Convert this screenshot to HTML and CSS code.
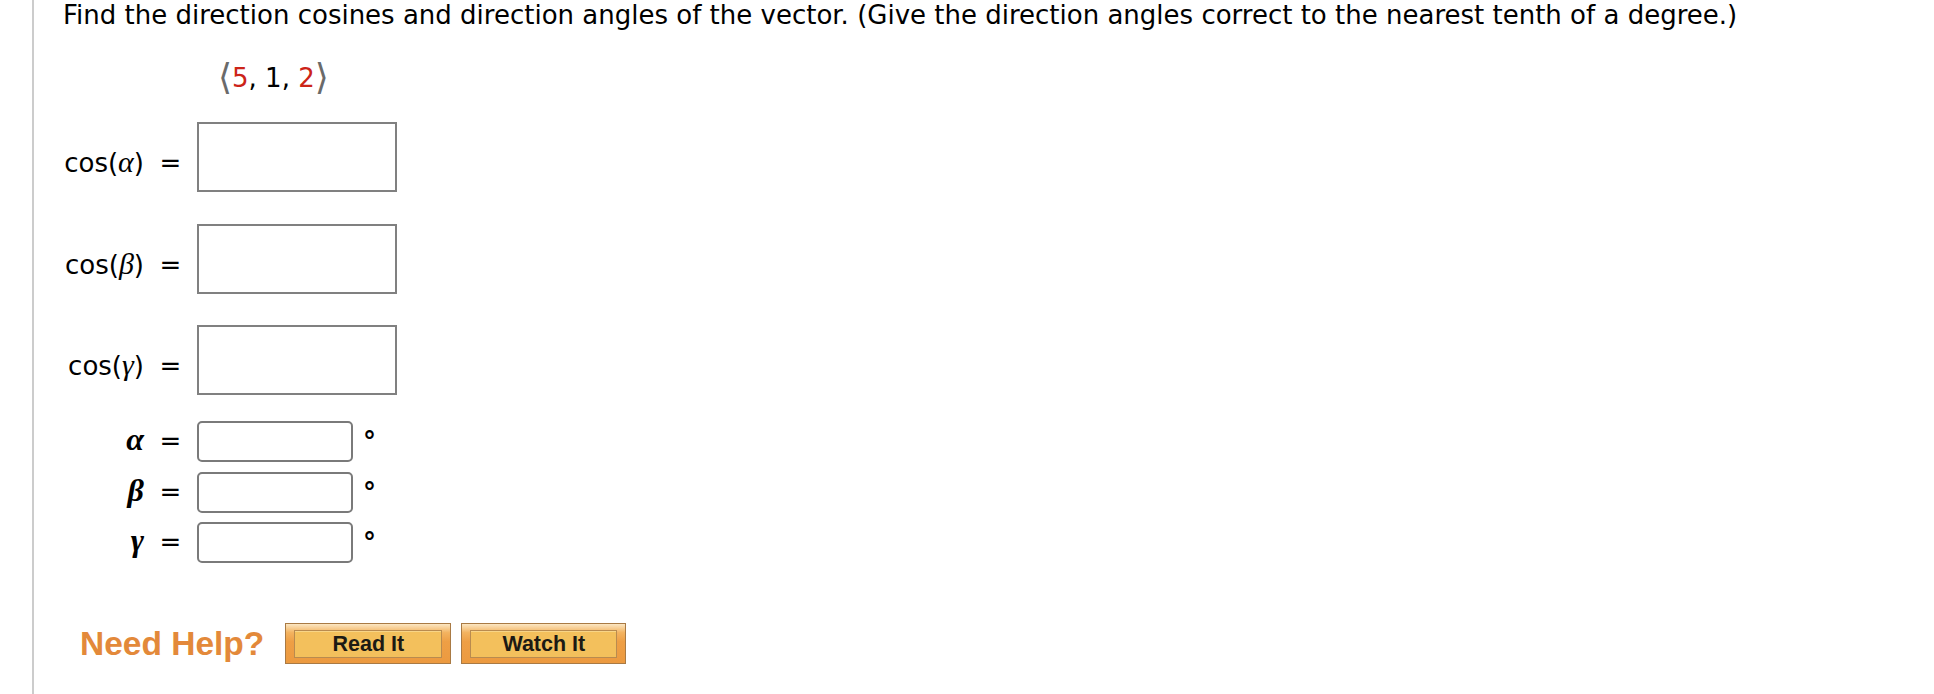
FILE: index.html
```html
<!DOCTYPE html>
<html lang="en">
<head>
<meta charset="utf-8">
<title>Direction cosines</title>
<link rel="stylesheet" href="styles.css">
</head>
<body>
<div class="page">
  <p class="prompt">Find the direction cosines and direction angles of the vector. (Give the direction angles correct to the nearest tenth of a degree.)</p>
  <div class="vector"><span class="br">⟨</span><span class="red">5</span>, 1, <span class="red">2</span><span class="br">⟩</span></div>

  <div class="big-rows">
    <div class="row big">
      <div class="label">cos(<span class="gk">α</span>)</div>
      <div class="eq">=</div>
      <input class="box-big" type="text" aria-label="cos alpha">
    </div>
    <div class="row big">
      <div class="label">cos(<span class="gk">β</span>)</div>
      <div class="eq">=</div>
      <input class="box-big" type="text" aria-label="cos beta">
    </div>
    <div class="row big">
      <div class="label">cos(<span class="gk">γ</span>)</div>
      <div class="eq">=</div>
      <input class="box-big" type="text" aria-label="cos gamma">
    </div>
  </div>

  <div class="small-rows">
    <div class="row small">
      <div class="label"><span class="gk gk-lg">α</span></div>
      <div class="eq">=</div>
      <input class="box-small" type="text" aria-label="alpha">
      <span class="deg">°</span>
    </div>
    <div class="row small">
      <div class="label"><span class="gk gk-lg">β</span></div>
      <div class="eq">=</div>
      <input class="box-small" type="text" aria-label="beta">
      <span class="deg">°</span>
    </div>
    <div class="row small">
      <div class="label"><span class="gk gk-lg">γ</span></div>
      <div class="eq">=</div>
      <input class="box-small" type="text" aria-label="gamma">
      <span class="deg">°</span>
    </div>
  </div>

  <div class="help">
    <span class="need">Need Help?</span>
    <span class="btn"><span class="btn-face">Read It</span></span>
    <span class="btn"><span class="btn-face">Watch It</span></span>
  </div>
</div>
</body>
</html>
```
FILE: styles.css
```css
html, body {
  margin: 0;
  padding: 0;
  background: #fff;
}
body {
  font-family: "DejaVu Sans", Verdana, sans-serif;
  font-size: 26px;
  color: #000;
}
.page {
  margin-left: 32px;
  border-left: 2px solid #cccccc;
  padding-left: 29px;
  height: 694px;
  box-sizing: border-box;
}
.prompt {
  margin: 0;
  line-height: 30px;
  white-space: nowrap;
}
.vector {
  margin-top: 33px;
  margin-left: 155px;
  height: 30px;
  line-height: 30px;
}
.br {
  color: #6a6a6a;
  font-size: 36px;
  line-height: 0;
  position: relative;
  top: 2px;
}
.red {
  color: #cc2418;
}
.big-rows {
  margin-top: 29px;
  display: flex;
  flex-direction: column;
  gap: 31.5px;
}
.small-rows {
  margin-top: 26px;
  display: flex;
  flex-direction: column;
  gap: 9.5px;
}
.row {
  display: flex;
  align-items: flex-start;
}
.row.big { height: 70px; }
.row.small { height: 41px; }
.label {
  width: 81px;
  text-align: right;
  line-height: 30px;
  white-space: nowrap;
}
.eq {
  width: 53px;
  text-align: center;
  line-height: 30px;
}
.big .label, .big .eq { padding-top: 26px; }
.small .label, .small .eq { padding-top: 5px; }
.gk {
  font-family: "Liberation Serif", "Times New Roman", serif;
  font-style: italic;
  font-size: 30px;
  line-height: 0;
}
.gk-lg {
  font-size: 32px;
  font-weight: bold;
}
.box-big, .box-small {
  display: block;
  margin: 0;
  padding: 0;
  box-sizing: border-box;
  border: 2px solid #808080;
  background: #fff;
  outline: none;
}
.box-big {
  width: 200px;
  height: 70px;
  border-radius: 0;
}
.box-small {
  width: 156px;
  height: 41px;
  border-radius: 5px;
  border-color: #7a7a7a;
}
.deg {
  margin-left: 10px;
  padding-top: 5px;
  line-height: 30px;
  font-weight: bold;
}
.help {
  margin-top: 60px;
  display: flex;
  align-items: center;
  height: 41px;
}
.need {
  margin-left: 17px;
  margin-right: 21px;
  font-family: "Liberation Sans", Arial, sans-serif;
  font-weight: bold;
  font-size: 33.5px;
  color: #e3893a;
  white-space: nowrap;
}
.btn {
  display: flex;
  box-sizing: border-box;
  width: 166px;
  height: 41px;
  margin-right: 10px;
  padding: 6px 8px 5px 8px;
  border: 1px solid #a97a44;
  background: linear-gradient(#fbe6c2 0%, #f3b360 22%, #ee9f45 45%, #ec9a40 100%);
}
.btn + .btn { width: 165px; }
.btn-face {
  flex: 1;
  display: flex;
  align-items: center;
  justify-content: center;
  border: 1px solid #b98b4f;
  background: #f3c05c;
  box-shadow: inset 0 1px 0 #f8d587;
  font-family: "Liberation Sans", Arial, sans-serif;
  font-weight: bold;
  font-size: 21.5px;
  color: #1c1a14;
  white-space: nowrap;
}
```
